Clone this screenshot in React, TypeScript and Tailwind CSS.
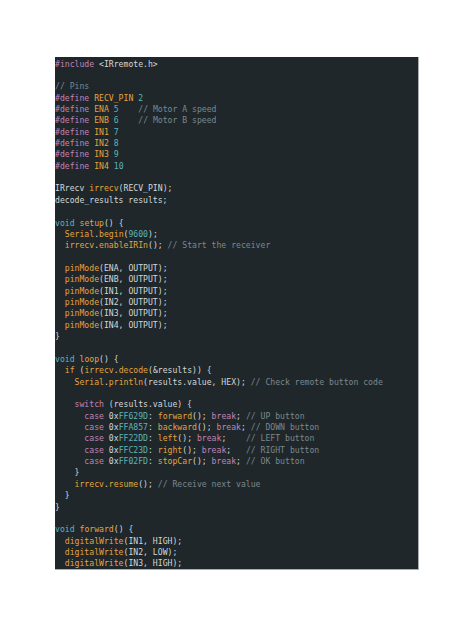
import React from "react";

type Seg = [string, string];

const P = "text-[#d3d7d9]"; // plain
const K = "text-[#c283b6]"; // directive / keyword purple
const O = "text-[#e4a43c]"; // orange identifiers / functions
const N = "text-[#5db4b8]"; // numbers / teal
const C = "text-[#7b878d]"; // comments

const lines: Seg[][] = [
  [["#include", K], [" <IRremote.h>", P]],
  [],
  [["// Pins", C]],
  [["#define", K], [" ", P], ["RECV_PIN", O], [" ", P], ["2", N]],
  [["#define", K], [" ", P], ["ENA", O], [" ", P], ["5", N], ["    ", P], ["// Motor A speed", C]],
  [["#define", K], [" ", P], ["ENB", O], [" ", P], ["6", N], ["    ", P], ["// Motor B speed", C]],
  [["#define", K], [" ", P], ["IN1", O], [" ", P], ["7", N]],
  [["#define", K], [" ", P], ["IN2", O], [" ", P], ["8", N]],
  [["#define", K], [" ", P], ["IN3", O], [" ", P], ["9", N]],
  [["#define", K], [" ", P], ["IN4", O], [" ", P], ["10", N]],
  [],
  [["IRrecv ", P], ["irrecv", O], ["(RECV_PIN);", P]],
  [["decode_results results;", P]],
  [],
  [["void", N], [" ", P], ["setup", O], ["() {", P]],
  [["  ", P], ["Serial", O], [".", P], ["begin", O], ["(", P], ["9600", N], [");", P]],
  [["  ", P], ["irrecv", O], [".", P], ["enableIRIn", O], ["(); ", P], ["// Start the receiver", C]],
  [],
  [["  ", P], ["pinMode", O], ["(ENA, OUTPUT);", P]],
  [["  ", P], ["pinMode", O], ["(ENB, OUTPUT);", P]],
  [["  ", P], ["pinMode", O], ["(IN1, OUTPUT);", P]],
  [["  ", P], ["pinMode", O], ["(IN2, OUTPUT);", P]],
  [["  ", P], ["pinMode", O], ["(IN3, OUTPUT);", P]],
  [["  ", P], ["pinMode", O], ["(IN4, OUTPUT);", P]],
  [["}", P]],
  [],
  [["void", N], [" ", P], ["loop", O], ["() {", P]],
  [["  ", P], ["if", O], [" (", P], ["irrecv", O], [".", P], ["decode", O], ["(&results)) {", P]],
  [["    ", P], ["Serial", O], [".", P], ["println", O], ["(results.value, HEX); ", P], ["// Check remote button code", C]],
  [],
  [["    ", P], ["switch", K], [" (results.value) {", P]],
  [["      ", P], ["case", K], [" 0x", P], ["FF629D", N], [": ", P], ["forward", O], ["(); ", P], ["break", K], ["; ", P], ["// UP button", C]],
  [["      ", P], ["case", K], [" 0x", P], ["FFA857", N], [": ", P], ["backward", O], ["(); ", P], ["break", K], ["; ", P], ["// DOWN button", C]],
  [["      ", P], ["case", K], [" 0x", P], ["FF22DD", N], [": ", P], ["left", O], ["(); ", P], ["break", K], [";    ", P], ["// LEFT button", C]],
  [["      ", P], ["case", K], [" 0x", P], ["FFC23D", N], [": ", P], ["right", O], ["(); ", P], ["break", K], [";   ", P], ["// RIGHT button", C]],
  [["      ", P], ["case", K], [" 0x", P], ["FF02FD", N], [": ", P], ["stopCar", O], ["(); ", P], ["break", K], ["; ", P], ["// OK button", C]],
  [["    }", P]],
  [["    ", P], ["irrecv", O], [".", P], ["resume", O], ["(); ", P], ["// Receive next value", C]],
  [["  }", P]],
  [["}", P]],
  [],
  [["void", N], [" ", P], ["forward", O], ["() {", P]],
  [["  ", P], ["digitalWrite", O], ["(IN1, HIGH);", P]],
  [["  ", P], ["digitalWrite", O], ["(IN2, LOW);", P]],
  [["  ", P], ["digitalWrite", O], ["(IN3, HIGH);", P]],
];

export default function App() {
  return (
    <div className="w-[474px] h-[632px] bg-white pt-[57px] pl-[55px]">
      <div className="w-[364px] h-[513px] bg-[#1f272b] overflow-hidden border-r border-b border-[#a9adaf] pt-[1.5px]">
        <pre
          className="m-0 text-[8.15px] leading-[11.36px] whitespace-pre"
          style={{ fontFamily: '"DejaVu Sans Mono", "Liberation Mono", monospace' }}
        >
          {lines.map((segs, i) => (
            <div key={i} className="h-[11.36px]">
              {segs.length === 0 ? " " : segs.map((s, j) => (
                <span key={j} className={s[1]}>{s[0]}</span>
              ))}
            </div>
          ))}
        </pre>
      </div>
    </div>
  );
}
